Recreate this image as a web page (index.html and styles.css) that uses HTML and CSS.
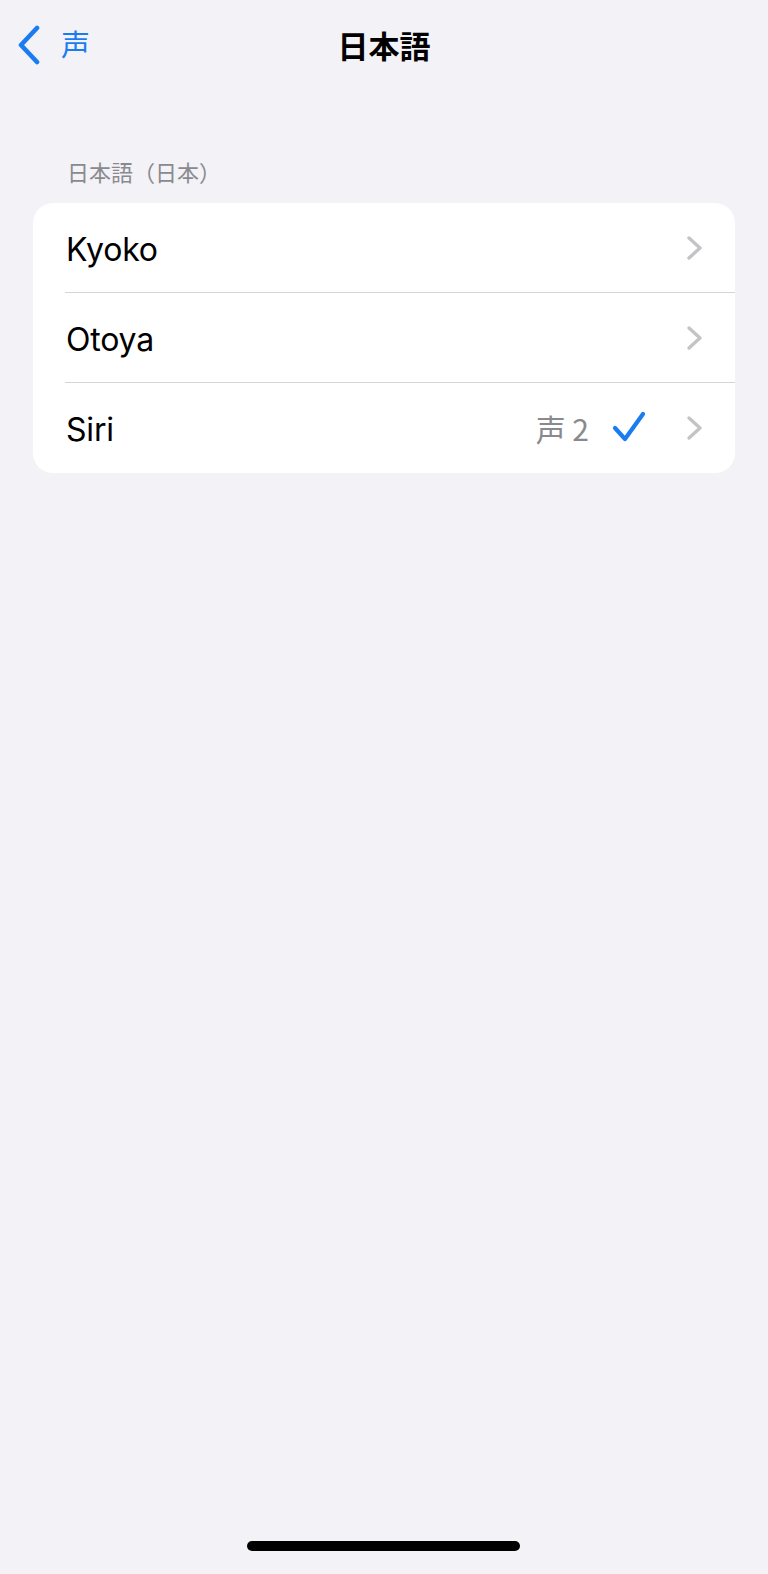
FILE: index.html
```html
<!DOCTYPE html>
<html lang="ja">
<head>
<meta charset="utf-8">
<title>日本語</title>
<link rel="stylesheet" href="styles.css">
</head>
<body>
<div class="screen">
  <header class="nav">
    <div class="back">
      <svg class="back-chev" width="26" height="40" viewBox="0 0 26 40"><path d="M21 3 L5 20 L21 37" fill="none" stroke="#1a7cf0" stroke-width="4.6" stroke-linecap="round" stroke-linejoin="round"/></svg>
      <span class="back-label">声</span>
    </div>
    <h1 class="title">日本語</h1>
    <div class="spacer"></div>
  </header>

  <div class="section-header">日本語（日本）</div>

  <div class="card">
    <div class="row">
      <span class="label">Kyoko</span>
      <svg class="chev" width="18" height="26" viewBox="0 0 18 26"><path d="M3 3 L14 13 L3 23" fill="none" stroke="#c4c4c7" stroke-width="3.4" stroke-linecap="round" stroke-linejoin="round"/></svg>
    </div>
    <div class="row">
      <span class="label">Otoya</span>
      <svg class="chev" width="18" height="26" viewBox="0 0 18 26"><path d="M3 3 L14 13 L3 23" fill="none" stroke="#c4c4c7" stroke-width="3.4" stroke-linecap="round" stroke-linejoin="round"/></svg>
    </div>
    <div class="row">
      <span class="label">Siri</span>
      <span class="value">声 2</span>
      <svg class="check" width="34" height="32" viewBox="0 0 34 32"><path d="M3 17 L13 28 L31 3" fill="none" stroke="#1a7cf0" stroke-width="4.2" stroke-linecap="round" stroke-linejoin="round"/></svg>
      <svg class="chev" width="18" height="26" viewBox="0 0 18 26"><path d="M3 3 L14 13 L3 23" fill="none" stroke="#c4c4c7" stroke-width="3.4" stroke-linecap="round" stroke-linejoin="round"/></svg>
    </div>
  </div>

  <div class="home-indicator"></div>
</div>
</body>
</html>
```

FILE: styles.css
```css
html, body {
  margin: 0;
  padding: 0;
  background: #f2f2f7;
}

body {
  font-family: "Inter", "Noto Sans CJK JP", sans-serif;
  color: #000;
}

.screen {
  position: relative;
  min-height: 1574px;
}

.nav {
  display: grid;
  grid-template-columns: 1fr auto 1fr;
  align-items: center;
  height: 90px;
}

.back {
  display: flex;
  align-items: center;
  padding-left: 16px;
  gap: 19px;
}

.back-chev {
  display: block;
}

.back-label {
  font-family: "Noto Sans CJK JP", sans-serif;
  font-size: 29px;
  color: #1a7cf0;
  line-height: 1;
  margin-top: -4px;
}

.title {
  margin: 0;
  font-family: "Noto Sans CJK JP", sans-serif;
  font-weight: 700;
  font-size: 31px;
  line-height: 1;
  margin-top: -2px;
}

.section-header {
  margin-top: 66px;
  padding-left: 67px;
  font-family: "Noto Sans CJK JP", sans-serif;
  font-size: 22px;
  line-height: 30px;
  color: #8a8a8e;
}

.card {
  margin: 17px 33px 0 33px;
  background: #fff;
  border-radius: 20px;
  overflow: hidden;
}

.row {
  display: flex;
  align-items: center;
  height: 89px;
  margin-left: 32px;
  padding-right: 31px;
  border-bottom: 1px solid #d4d4d8;
}

.row:last-child {
  border-bottom: none;
  height: 90px;
}

.label {
  flex: 1;
  font-size: 32px;
  letter-spacing: -0.2px;
  padding-left: 1px;
  padding-top: 3px;
}

.value {
  font-family: "Noto Sans CJK JP", "Inter", sans-serif;
  font-size: 30px;
  color: #8a8a8e;
}

.check {
  display: block;
  margin-left: 23px;
  margin-top: -2px;
}

.chev {
  display: block;
  margin-left: 40px;
}

.row .chev:nth-child(2) {
  margin-left: 0;
}

.home-indicator {
  position: absolute;
  left: 247px;
  bottom: 23px;
  width: 273px;
  height: 10px;
  border-radius: 5px;
  background: #000;
}
```
